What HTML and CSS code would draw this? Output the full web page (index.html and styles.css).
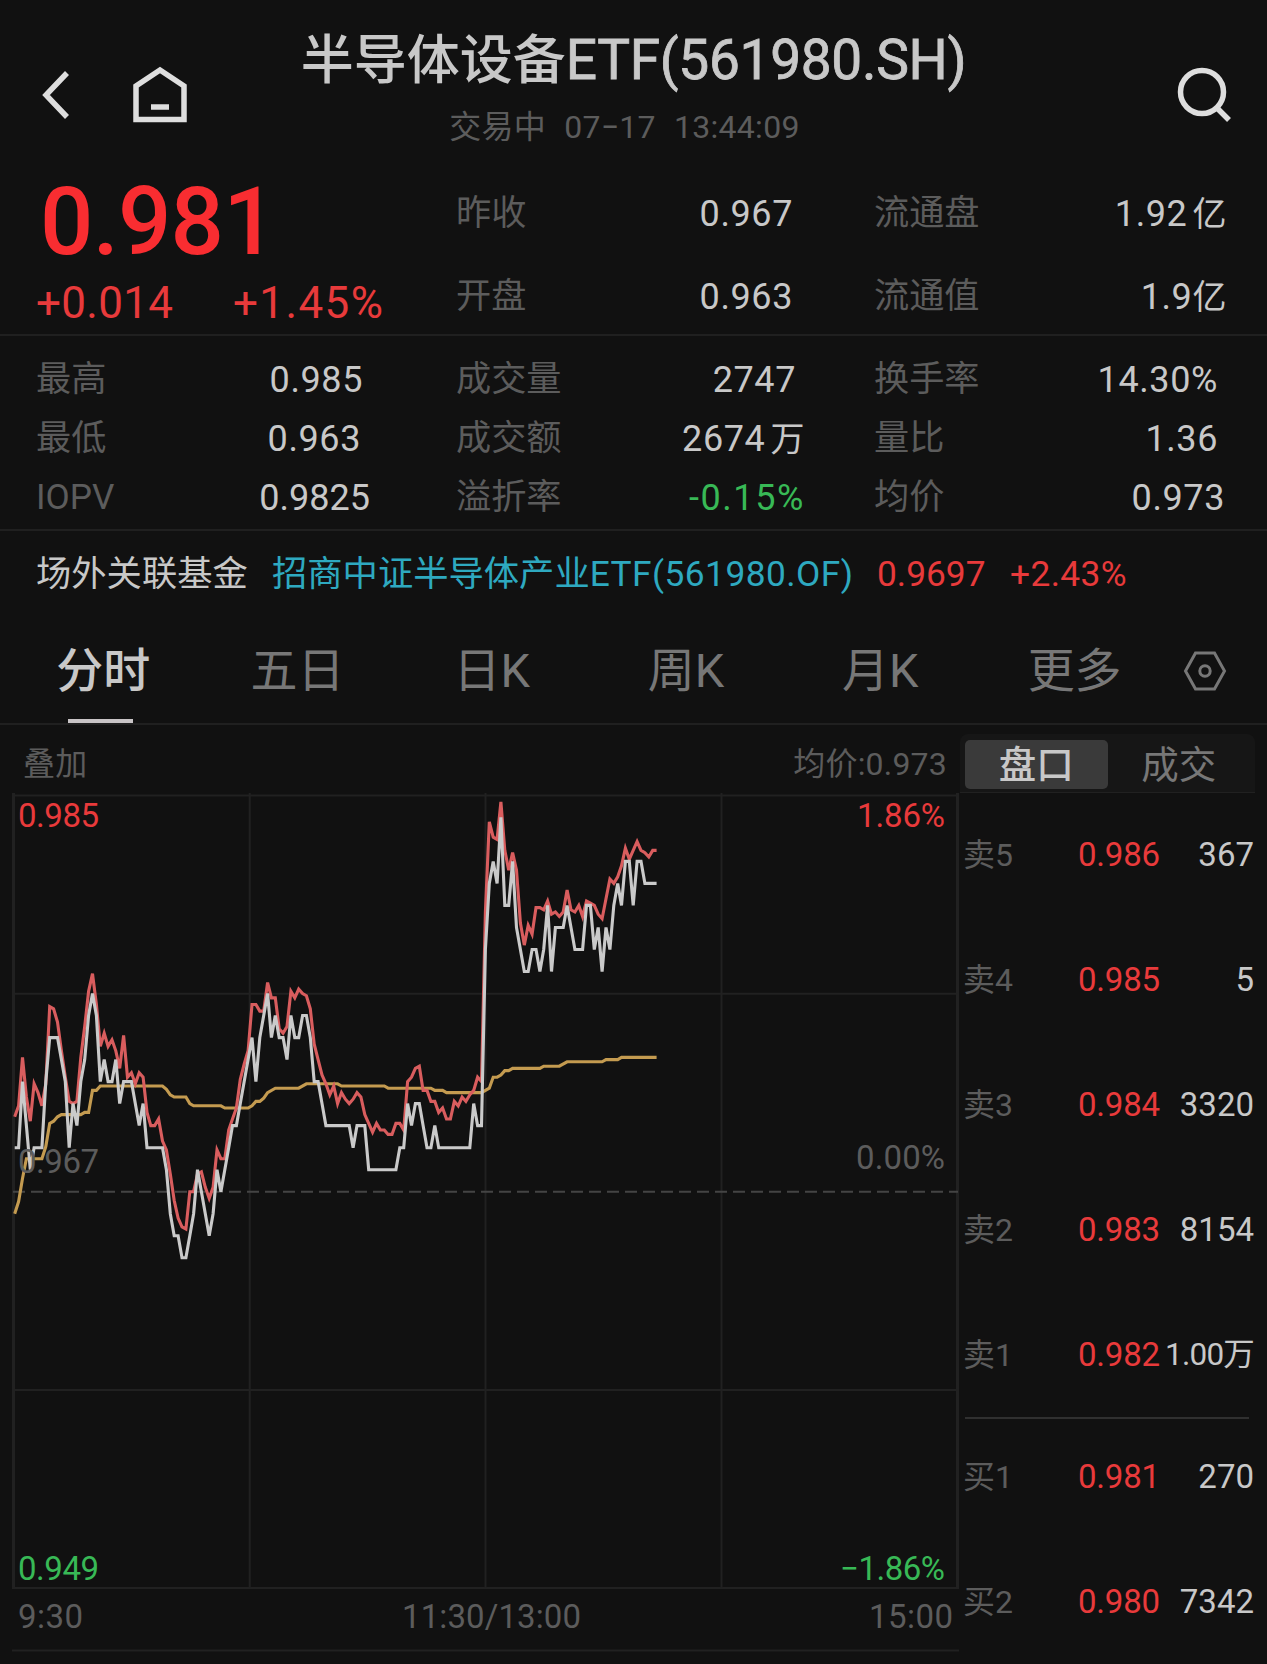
FILE: index.html
```html
<!DOCTYPE html>
<html lang="zh-CN">
<head>
<meta charset="UTF-8">
<meta name="viewport" content="width=device-width, initial-scale=1.0">
<title>半导体设备ETF(561980.SH)</title>
<link rel="stylesheet" href="styles.css">
</head>
<body>

<header class="header">
  <div class="header-left">
    <svg class="icon-back" width="32" height="50" viewBox="0 0 32 50"><path d="M28 3 L7 25 L28 47"/></svg>
    <svg class="icon-home" width="60" height="60" viewBox="0 0 60 60"><path d="M6 53.5 V20 L30 4 L54 20 V53.5 Z"/><path d="M21 41 H39"/></svg>
  </div>
  <div class="header-title">
    <h1>半导体设备<span class="code">ETF(561980.SH)</span></h1>
    <p><span>交易中</span><span>07−17</span><span>13:44:09</span></p>
  </div>
  <svg class="icon-search" width="60" height="60" viewBox="0 0 60 60"><circle cx="27" cy="26" r="21.5"/><path d="M42 42 L54 54"/></svg>
</header>

<section class="quote">
  <div class="price-box">
    <div class="price">0.981</div>
    <div class="change"><span class="change-value">+0.014</span><span class="change-rate">+1.45%</span></div>
  </div>
  <div class="cell"><span>昨收</span><b class="r14">0.967</b></div>
  <div class="cell"><span>流通盘</span><b>1.92<i class="unit">亿</i></b></div>
  <div class="cell"><span>开盘</span><b class="r14">0.963</b></div>
  <div class="cell"><span>流通值</span><b>1.9<i>亿</i></b></div>
</section>

<section class="stats">
  <div class="cell"><span>最高</span><b class="r7">0.985</b></div>
  <div class="cell"><span>成交量</span><b class="r10">2747</b></div>
  <div class="cell"><span>换手率</span><b class="r10">14.30%</b></div>
  <div class="cell"><span>最低</span><b class="r10">0.963</b></div>
  <div class="cell"><span>成交额</span><b>2674<i class="unit">万</i></b></div>
  <div class="cell"><span>量比</span><b class="r10">1.36</b></div>
  <div class="cell"><span>IOPV</span><b class="iopv">0.9825</b></div>
  <div class="cell"><span>溢折率</span><b class="green">-0.15%</b></div>
  <div class="cell"><span>均价</span><b class="r4">0.973</b></div>
</section>

<section class="fund">
  <span class="fund-label">场外关联基金</span>
  <a class="fund-name" href="#">招商中证半导体产业<span class="code">ETF(561980.OF)</span></a>
  <span class="fund-price">0.9697</span>
  <span class="fund-rate">+2.43%</span>
</section>

<nav class="tabs">
  <a class="tab active" href="#">分时</a>
  <a class="tab" href="#">五日</a>
  <a class="tab" href="#">日K</a>
  <a class="tab" href="#">周K</a>
  <a class="tab" href="#">月K</a>
  <a class="tab" href="#">更多</a>
  <svg class="icon-setting" width="44" height="44" viewBox="0 0 44 44"><path d="M12.5 4 H31.5 L41.5 22 L31.5 40 H12.5 L2.5 22 Z"/><circle cx="22" cy="22" r="5.2"/></svg>
</nav>

<main class="main">
  <section class="chart">
    <div class="chart-head"><span>叠加</span><span>均价:0.973</span></div>
    <svg class="chart-svg" width="960" height="872" viewBox="0 792 960 872">
      <g class="grid">
        <path d="M12 795.5 H959 M14 993.7 H957 M14 1390 H957 M12 1588 H959"/>
        <path d="M249.7 793 V1588 M485.5 793 V1588 M721.5 793 V1588"/>
        <path class="edge" d="M13.5 793 V1588 M957.5 793 V1588"/>
        <path d="M12 1650.5 H959"/>
      </g>
      <path class="base-line" d="M13 1191.8 H958"/>
      <polyline class="line-avg" id="line-avg"/>
      <polyline class="line-iopv" id="line-iopv"/>
      <polyline class="line-price" id="line-price"/>
      <g class="labels">
        <text class="up" x="18" y="827" textLength="81">0.985</text>
        <text class="up" x="857" y="827" textLength="88">1.86%</text>
        <text x="18" y="1173" textLength="81">0.967</text>
        <text x="856" y="1169" textLength="89">0.00%</text>
        <text class="down" x="18" y="1580" textLength="81">0.949</text>
        <text class="down" x="840" y="1580" textLength="105">−1.86%</text>
        <text x="18" y="1628" textLength="65">9:30</text>
        <text x="402" y="1628" textLength="179">11:30/13:00</text>
        <text x="869" y="1628" textLength="84">15:00</text>
      </g>
    </svg>
  </section>

  <aside class="book">
    <div class="book-tabs"><span class="active">盘口</span><span>成交</span></div>
    <div class="orders">
      <div class="order"><span>卖5</span><em>0.986</em><b>367</b></div>
      <div class="order"><span>卖4</span><em>0.985</em><b>5</b></div>
      <div class="order"><span>卖3</span><em>0.984</em><b>3320</b></div>
      <div class="order"><span>卖2</span><em>0.983</em><b>8154</b></div>
      <div class="order"><span>卖1</span><em>0.982</em><b class="wide">1.00万</b></div>
    </div>
    <div class="orders buy">
      <div class="order"><span>买1</span><em>0.981</em><b>270</b></div>
      <div class="order"><span>买2</span><em>0.980</em><b>7342</b></div>
    </div>
  </aside>
</main>

<script src="chart.js"></script>
</body>
</html>
```
FILE: styles.css
```css
* {
  box-sizing: border-box;
}

body {
  margin: 0;
  width: 1267px;
  height: 1664px;
  overflow: hidden;
  background-color: #111;
  color: #c8c8c8;
  font-family: Roboto, "Noto Sans CJK SC", sans-serif;
}

a {
  color: inherit;
  text-decoration: none;
}

b, i, em {
  font-weight: 400;
  font-style: normal;
}

svg {
  fill: none;
  display: block;
}

/* Header */
.header {
  display: flex;
  justify-content: space-between;
  height: 170px;
}

.header-left {
  display: flex;
  width: 240px;
  padding: 66px 0 0 39px;
  gap: 59px;
}

.icon-back, .icon-home, .icon-search {
  stroke: #dedede;
  stroke-width: 5.5;
}

.icon-back {
  margin-top: 4px;
}

.icon-search {
  margin: 66px 32px 0 148px;
}

.header-title {
  flex: 1;
  padding-top: 20px;
  text-align: center;
}

.header-title h1 {
  margin: 0;
  font-size: 53px;
  font-weight: 500;
  line-height: 81px;
  white-space: nowrap;
}

.header-title .code {
  font-size: 55px;
  font-weight: 400;
  letter-spacing: -0.3px;
  -webkit-text-stroke: 0.8px;
}

.header-title p {
  display: flex;
  justify-content: center;
  gap: 18px;
  margin: 0;
  padding-right: 18px;
  font-size: 32px;
  line-height: 51px;
  letter-spacing: 0.3px;
  color: #5c5c5c;
}

/* Quote */
.quote {
  display: grid;
  grid-template-columns: 420px 418px 1fr;
  grid-template-rows: 83px 83px;
  height: 166px;
  padding: 0 40px 0 36px;
  border-bottom: 2px solid #202020;
}

.price-box {
  grid-row: 1 / 3;
}

.price {
  padding-left: 4px;
  height: 104px;
  font-size: 94px;
  font-weight: 500;
  line-height: 104px;
  letter-spacing: -0.8px;
  color: #f92d31;
}

.change {
  display: flex;
  line-height: 59px;
  font-size: 44px;
  color: #e83a3b;
}

.change-value {
  width: 197px;
  letter-spacing: 0.3px;
}

.change-rate {
  letter-spacing: 1.4px;
}

.cell {
  display: flex;
  justify-content: space-between;
  align-items: center;
  font-size: 35.2px;
  line-height: 42px;
}

.cell span {
  padding-top: 2px;
  color: #5c5c5c;
}

.cell b {
  font-size: 36px;
  letter-spacing: 0.6px;
  padding-top: 5px;
}

.quote .cell:nth-child(even), .stats .cell:nth-child(3n+2) {
  padding-right: 69px;
}

.cell i {
  font-size: 34px;
}

.cell .unit {
  margin-left: 5px;
}

.cell .green {
  letter-spacing: 1.6px;
  color: #38b956;
}

.cell .r4 { margin-right: 2px; }
.cell .r7 { margin-right: 7px; }
.cell .r10 { margin-right: 9px; }
.cell .r14 { margin-right: 12px; }

/* Stats */
.stats {
  display: grid;
  grid-template-columns: 420px 418px 1fr;
  grid-template-rows: repeat(3, 59px);
  height: 195px;
  padding: 12px 40px 0 36px;
  border-bottom: 2px solid #202020;
}

.stats .cell:nth-child(3n+1) {
  padding-right: 86px;
}

.stats .iopv {
  letter-spacing: 0;
}

/* Linked fund */
.fund {
  display: flex;
  align-items: center;
  height: 84px;
  padding: 1px 0 0 36px;
  font-size: 35.3px;
  line-height: 42px;
  white-space: nowrap;
}

.fund-label {
  width: 236px;
}

.fund-name {
  width: 605px;
  color: #2ea9c0;
}

.fund-name .code {
  letter-spacing: 0.45px;
}

.fund-price {
  width: 133px;
  color: #e83a3b;
}

.fund-rate {
  letter-spacing: 0.4px;
  color: #e83a3b;
}

/* Period tabs */
.tabs {
  display: flex;
  align-items: center;
  height: 110px;
  padding-left: 6px;
  border-bottom: 2px solid #202020;
}

.tab {
  position: relative;
  width: 194.3px;
  height: 108px;
  text-align: center;
  font-size: 47px;
  line-height: 112px;
  color: #777;
}

.tab.active {
  color: #c8c8c8;
  font-weight: 500;
}

.tab.active::after {
  content: "";
  position: absolute;
  left: 62px;
  bottom: 0;
  width: 65px;
  height: 4px;
  background-color: #c8c4c6;
}

.icon-setting {
  margin: 3px 0 0 11px;
  stroke: #777;
  stroke-width: 3;
}

/* Chart */
.main {
  display: flex;
}

.chart {
  width: 960px;
}

.chart-head {
  display: flex;
  justify-content: space-between;
  height: 67px;
  padding: 0 13px 0 23px;
  font-size: 32px;
  line-height: 79px;
  letter-spacing: 0.2px;
  color: #5c5c5c;
}

.grid path {
  stroke: #212121;
  stroke-width: 2;
}

.grid .edge {
  stroke-width: 3;
}

.base-line {
  stroke: #444;
  stroke-width: 2;
  stroke-dasharray: 12 6;
}

.line-avg, .line-iopv, .line-price {
  stroke-width: 3.1;
}

.line-avg {
  stroke: #c49b50;
}

.line-iopv {
  stroke: #d95d5e;
}

.line-price {
  stroke: #cacaca;
}

.labels text {
  font-size: 33px;
  fill: #5c5c5c;
}

.labels .up {
  fill: #e83a3b;
}

.labels .down {
  fill: #38b956;
}

/* Order book */
.book {
  width: 295px;
  padding-top: 9px;
}

.book-tabs {
  display: flex;
  height: 59px;
  padding: 6px 5px 3px;
  background-color: #161616;
  border-bottom: 1px solid #212121;
  border-radius: 8px 8px 0 0;
}

.book-tabs span {
  flex: 1;
  text-align: center;
  font-size: 37.5px;
  line-height: 51px;
  color: #777;
}

.book-tabs .active {
  background-color: #3a3a3a;
  border-radius: 5px;
  color: #c8c8c8;
  font-weight: 500;
}

.orders {
  display: flex;
  flex-direction: column;
  height: 626px;
  margin: 0 6px 0 5px;
  border-bottom: 2px solid #303030;
}

.orders.buy {
  height: auto;
  margin-top: -4px;
  border-bottom: none;
}

.order {
  display: flex;
  align-items: center;
  flex: 0 0 124.8px;
  margin-right: -5px;
  margin-left: -2px;
  font-size: 33px;
  line-height: 40px;
  white-space: nowrap;
}

.order span {
  width: 115px;
  font-size: 32px;
  color: #5c5c5c;
}

.order em {
  letter-spacing: -0.2px;
  color: #e83a3b;
}

.order b {
  margin-left: auto;
}

.order .wide {
  font-size: 31.5px;
  letter-spacing: -0.8px;
}
```
FILE: chart.js
```js
// All series are in thousandths, one value per minute
const price = [
  969, 969, 972, 970, 968, 969, 969, 969, 972, 974, 974, 974, 973, 972, 969, 971, 970, 972, 973, 975,
  976, 975, 972, 973, 972, 972, 973, 971, 972, 972, 972, 971, 970, 971, 969, 969, 969, 969, 969, 968,
  966, 965, 965, 964, 964, 965, 966, 968, 967, 966, 965, 966, 968, 967, 968, 969, 970, 970, 971, 972,
  973, 974, 972, 974, 975, 976, 974, 975, 974, 974, 973, 975, 974, 974, 975, 975, 974, 972, 972, 971,
  970, 970, 970, 970, 970, 970, 970, 969, 970, 970, 970, 968, 968, 968, 968, 968, 968, 968, 968, 969,
  969, 971, 970, 971, 971, 970, 969, 969, 970, 969, 969, 969, 969, 969, 969, 969, 969, 969, 971, 970,
  970, 978, 981, 982, 981, 984, 980, 980, 982, 979, 978, 977, 977, 978, 978, 977, 978, 980, 977, 979,
  979, 979, 980, 979, 978, 978, 978, 980, 980, 978, 979, 977, 979, 978, 980, 981, 980, 982, 982, 980,
  982, 982, 981, 981, 981, 981
];

const iopv = [
  970.4, 970.9, 973.1, 971.3, 970.2, 971.9, 971.5, 970.9, 971.9, 975.4, 975.3, 974.7, 973.4, 972.2, 971.1, 971, 971.1, 973.1, 974.5, 976.1,
  976.9, 975.5, 973.6, 974.2, 973.6, 973.9, 973.4, 972.6, 974.1, 972.2, 972.4, 971.9, 972.4, 972.2, 970.6, 970, 970, 970.3, 969.3, 968.9,
  967.8, 966.6, 965.8, 965.4, 965.3, 967, 967, 967.8, 967.9, 967.2, 966.7, 967.2, 968.9, 968.5, 968.5, 969.8, 970.3, 970.8, 972.1, 972.8,
  973.4, 975.5, 975.5, 975.2, 975.2, 976.5, 975.8, 975.8, 974.4, 974.2, 974.5, 976.1, 975.8, 976.2, 976, 975.9, 975.3, 973.7, 973, 972.3,
  971.9, 971.4, 971.8, 971, 971.5, 971.2, 971, 971.2, 971.5, 971.3, 970.5, 970.1, 969.7, 970.1, 969.8, 969.8, 969.6, 969.6, 970.1, 970.1,
  969.8, 972, 972.2, 972.6, 972.7, 971.6, 971.6, 971.1, 971.1, 970.6, 970.8, 970.3, 970.3, 971.1, 970.9, 971.3, 971.1, 971.4, 971.6, 972.2,
  972, 979.7, 983.8, 983.1, 983, 984.7, 982.5, 981.6, 982.4, 981.6, 979.2, 978.2, 979.1, 978.7, 979.9, 979.9, 979.8, 980.2, 979.6, 979.7,
  979.5, 979.7, 980.7, 979.8, 979.7, 980, 979.5, 980.2, 980.1, 980, 979.6, 979.4, 980.3, 981.2, 981, 981.3, 981.8, 982.6, 982.1, 982.5,
  982.9, 982.5, 982.4, 982.2, 982.5, 982.5
];

// [minute, average], only where it turns
const avg = [
  [0, 966], [1, 966.55], [2, 967.6], [3, 968.5], [7, 968.5], [8, 969.05], [9, 970.1], [10, 970.2], [11, 970.4], [12, 970.5],
  [17, 970.5], [18, 970.6], [19, 970.6], [20, 971.6], [21, 971.6], [22, 971.8], [38, 971.8], [39, 971.65], [40, 971.4], [41, 971.3],
  [44, 971.3], [45, 971], [46, 970.9], [53, 970.9], [54, 970.8], [60, 970.8], [61, 970.9], [62, 971.1], [63, 971.1], [64, 971.25],
  [65, 971.5], [67, 971.7], [73, 971.7], [75, 971.9], [83, 971.9], [84, 971.8], [95, 971.8], [96, 971.7], [107, 971.7], [108, 971.6],
  [110, 971.6], [111, 971.5], [120, 971.5], [122, 971.7], [123, 972.2], [124, 972.2], [125, 972.3], [126, 972.5], [127, 972.5], [128, 972.6],
  [135, 972.6], [136, 972.7], [140, 972.7], [142, 972.9], [151, 972.9], [152, 973], [155, 973], [156, 973.1], [165, 973.1]
];

function draw(id, points) {
  const text = points.map(([minute, value]) => {
    const x = 14.7 + minute * 3.89;
    const y = 1191.7 - (value - 967) * 22.02;
    return x.toFixed(1) + ',' + y.toFixed(1);
  }).join(' ');
  document.getElementById(id).setAttribute('points', text);
}

draw('line-avg', avg);
draw('line-iopv', iopv.map((value, minute) => [minute, value]));
draw('line-price', price.map((value, minute) => [minute, value]));
```
